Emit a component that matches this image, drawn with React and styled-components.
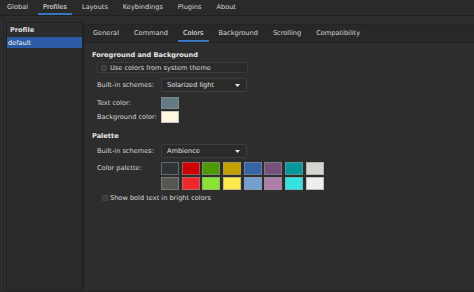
import React from "react";
import styled, { createGlobalStyle } from "styled-components";

const GlobalStyle = createGlobalStyle`
  html, body { margin: 0; padding: 0; background: #2d2d2d; }
  body {
    font-family: "DejaVu Sans", "Noto Sans", sans-serif;
    font-size: 6.6px;
    color: #dadada;
  }
  * { box-sizing: border-box; }
`;

const Window = styled.div`
  width: 474px;
  height: 292px;
  display: flex;
  flex-direction: column;
  overflow: hidden;
  background: #2d2d2d;
`;

const TopBar = styled.div`
  height: 16px;
  flex: none;
  display: flex;
  gap: 5px;
  padding-left: 2px;
  background: #2a2a2a;
  border-bottom: 1px solid #1f1f1f;
`;

const Tab = styled.div`
  display: flex;
  align-items: center;
  padding: 0 5px;
  border-bottom: 2px solid ${(p) => (p.$active ? "#3a74bd" : "transparent")};
  color: ${(p) => (p.$active ? "#f0f0f0" : "#d6d6d6")};
  white-space: nowrap;
`;

const Body = styled.div`
  flex: 1;
  display: flex;
  padding-left: 3px;
  min-height: 0;
`;

const Frame = styled.div`
  flex: 1;
  display: flex;
  border-left: 1px solid #232323;
  border-bottom: 1px solid #232323;
  padding: 6px 0 1px 2px;
`;

const LeftPanel = styled.div`
  width: 77px;
  flex: none;
  display: flex;
  flex-direction: column;
  border: 1px solid #222;
  background: #2c2c2c;
`;

const ListHeader = styled.div`
  height: 14px;
  display: flex;
  align-items: center;
  padding-left: 3px;
  font-weight: bold;
  color: #e0e0e0;
`;

const ListItem = styled.div`
  height: 11px;
  display: flex;
  align-items: center;
  padding-left: 1px;
  background: ${(p) => (p.$selected ? "#2a5ba4" : "transparent")};
  color: #f6f6f6;
`;

const RightPane = styled.div`
  flex: 1;
  display: flex;
  flex-direction: column;
  margin-top: 2px;
  border-left: 1px solid #222;
`;

const SubTabBar = styled.div`
  height: 19px;
  flex: none;
  display: flex;
  gap: 5px;
  padding-left: 4px;
  background: #282828;
  border-top: 1px solid #242424;
  border-bottom: 1px solid #222;
`;

const Content = styled.div`
  flex: 1;
  display: flex;
  flex-direction: column;
  align-items: flex-start;
  padding: 7px 0 0 8px;
`;

const Heading = styled.div`
  height: 10px;
  display: flex;
  align-items: center;
  font-weight: bold;
  color: #e6e6e6;
  margin-top: ${(p) => p.$mt || 0}px;
`;

const CheckFrame = styled.div`
  margin: 2px 0 0 5px;
  width: 151px;
  height: 11px;
  display: flex;
  align-items: center;
  gap: 3px;
  padding-left: 3px;
  border: 1px solid #3b3b3b;
  border-radius: 2px;
  background: #2a2a2a;
`;

const CheckRow = styled.div`
  display: flex;
  align-items: center;
  gap: 2px;
  margin: ${(p) => p.$mt || 0}px 0 0 ${(p) => p.$ml || 0}px;
  height: 8px;
`;

const Checkbox = styled.span`
  width: 6px;
  height: 6px;
  flex: none;
  border: 1px solid #474747;
  border-radius: 1px;
  background: #3a3a3a;
`;

const FormRow = styled.div`
  display: flex;
  align-items: ${(p) => (p.$top ? "flex-start" : "center")};
  margin: ${(p) => p.$mt || 0}px 0 0 5px;
`;

const Label = styled.div`
  width: 64px;
  flex: none;
  color: #d6d6d6;
  ${(p) => p.$top && "line-height: 13px;"}
`;

const Combo = styled.div`
  width: 86px;
  height: 14px;
  display: flex;
  align-items: center;
  justify-content: space-between;
  padding: 0 6px 0 5px;
  border: 1px solid #3e3e3e;
  border-radius: 2px;
  background: #2a2a2a;
  color: #e2e2e2;
`;

const Swatch = styled.div`
  width: 18px;
  height: ${(p) => p.$h || 12}px;
  border: 1px solid rgba(150, 150, 150, 0.55);
  background: ${(p) => p.$color};
`;

const PaletteGrid = styled.div`
  display: grid;
  grid-template-columns: repeat(8, 18px);
  column-gap: 2.7px;
  row-gap: 2px;
`;

const Arrow = () => (
  <svg width="5" height="3" viewBox="0 0 5 3">
    <polygon points="0,0 5,0 2.5,3" fill="#e8e8e8" />
  </svg>
);

const palette = [
  "#2e3436", "#cc0000", "#4e9a06", "#c4a000", "#3465a4", "#75507b", "#06989a", "#d3d7cf",
  "#555753", "#ef2929", "#8ae234", "#fce94f", "#729fcf", "#ad7fa8", "#34e2e2", "#eeeeec",
];

export default function App() {
  const top = ["Global", "Profiles", "Layouts", "Keybindings", "Plugins", "About"];
  const sub = ["General", "Command", "Colors", "Background", "Scrolling", "Compatibility"];
  return (
    <Window>
      <GlobalStyle />
      <TopBar>
        {top.map((t) => (
          <Tab key={t} $active={t === "Profiles"}>{t}</Tab>
        ))}
      </TopBar>
      <Body>
        <Frame>
          <LeftPanel>
            <ListHeader>Profile</ListHeader>
            <ListItem $selected>default</ListItem>
          </LeftPanel>
          <RightPane>
            <SubTabBar>
              {sub.map((t) => (
                <Tab key={t} $active={t === "Colors"}>{t}</Tab>
              ))}
            </SubTabBar>
            <Content>
              <Heading>Foreground and Background</Heading>
              <CheckFrame>
                <Checkbox />
                <span>Use colors from system theme</span>
              </CheckFrame>
              <FormRow $mt={5}>
                <Label>Built-in schemes:</Label>
                <Combo>
                  <span>Solarized light</span>
                  <Arrow />
                </Combo>
              </FormRow>
              <FormRow $mt={5}>
                <Label>Text color:</Label>
                <Swatch $color="#657b83" />
              </FormRow>
              <FormRow $mt={2}>
                <Label>Background color:</Label>
                <Swatch $color="#fdf6e3" />
              </FormRow>
              <Heading $mt={8}>Palette</Heading>
              <FormRow $mt={3}>
                <Label>Built-in schemes:</Label>
                <Combo>
                  <span>Ambience</span>
                  <Arrow />
                </Combo>
              </FormRow>
              <FormRow $mt={4} $top>
                <Label $top>Color palette:</Label>
                <PaletteGrid>
                  {palette.map((c, i) => (
                    <Swatch key={i} $color={c} $h={13} />
                  ))}
                </PaletteGrid>
              </FormRow>
              <CheckRow $mt={4} $ml={10}>
                <Checkbox />
                <span>Show bold text in bright colors</span>
              </CheckRow>
            </Content>
          </RightPane>
        </Frame>
      </Body>
    </Window>
  );
}
